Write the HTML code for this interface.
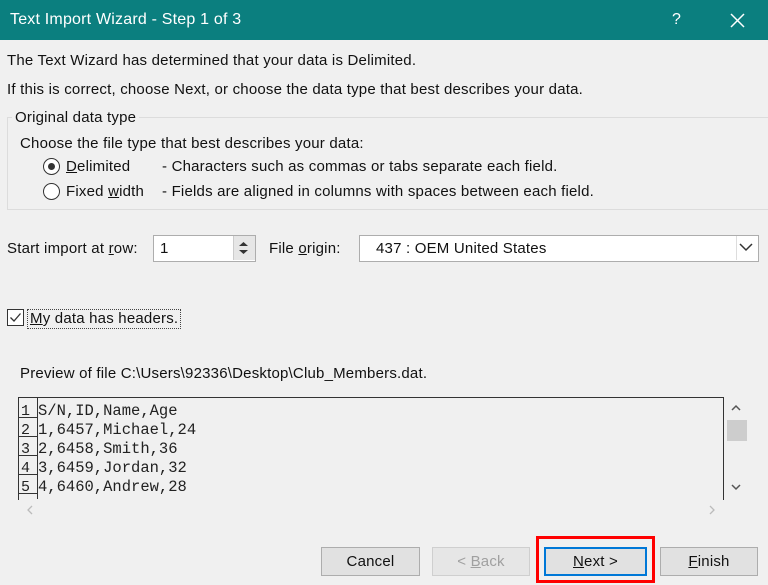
<!DOCTYPE html>
<html><head><meta charset="utf-8"><style>
body{margin:0;width:768px;height:585px;background:#f0f0f0;font-family:"Liberation Sans",sans-serif;font-size:15px;letter-spacing:0.2px;color:#111;position:relative;overflow:hidden}
.a{position:absolute;white-space:nowrap}
.t{line-height:18px;margin-top:1px}
.btn{position:absolute;top:547px;height:27px;border:1px solid #adadad;background:#e1e1e1;text-align:center;line-height:27px;font-size:15px}
.mono{font-family:"Liberation Mono",monospace;color:#222}
</style></head><body>
<div class="a" style="left:0;top:0;width:768px;height:40px;background:#0b7f7f"></div>
<div class="a t" style="left:10px;top:10px;color:#fff;font-size:16px">Text Import Wizard - Step 1 of 3</div>
<div class="a t" style="left:672px;top:10px;color:#fff;font-size:16px">?</div>
<svg class="a" style="left:730px;top:13px" width="15" height="15"><path d="M1 1L14 14M14 1L1 14" stroke="#fff" stroke-width="1.5"/></svg>

<div class="a t" style="left:7px;top:51px">The Text Wizard has determined that your data is Delimited.</div>
<div class="a t" style="left:7px;top:80px">If this is correct, choose Next, or choose the data type that best describes your data.</div>

<div class="a" style="left:7px;top:117px;width:770px;height:91px;border:1px solid #dcdcdc"></div>
<div class="a t" style="left:12px;top:108px;background:#f0f0f0;padding:0 3px">Original data type</div>
<div class="a t" style="left:20px;top:134px">Choose the file type that best describes your data:</div>
<div class="a" style="left:43px;top:158px;width:15px;height:15px;border:1px solid #333;border-radius:50%;background:#fff"></div>
<div class="a" style="left:48px;top:163px;width:7px;height:7px;border-radius:50%;background:#333"></div>
<div class="a t" style="left:66px;top:157px"><u>D</u>elimited</div>
<div class="a t" style="left:162px;top:157px">- Characters such as commas or tabs separate each field.</div>
<div class="a" style="left:43px;top:183px;width:15px;height:15px;border:1px solid #333;border-radius:50%;background:#fff"></div>
<div class="a t" style="left:66px;top:182px">Fixed <u>w</u>idth</div>
<div class="a t" style="left:162px;top:182px">- Fields are aligned in columns with spaces between each field.</div>

<div class="a t" style="left:7px;top:239px">Start import at <u>r</u>ow:</div>
<div class="a" style="left:153px;top:235px;width:101px;height:25px;border:1px solid #adadad;background:#fff"></div>
<div class="a t" style="left:160px;top:239px">1</div>
<div class="a" style="left:233px;top:236px;width:21px;height:24px;background:#e6e6e6;border-left:1px solid #ccc"></div>
<svg class="a" style="left:238px;top:240px" width="11" height="16"><path d="M1 6L5.5 2L10 6Z M1 10L5.5 14L10 10Z" fill="#333"/></svg>
<div class="a t" style="left:269px;top:239px">File <u>o</u>rigin:</div>
<div class="a" style="left:359px;top:235px;width:398px;height:25px;border:1px solid #adadad;background:#fff"></div>
<div class="a t" style="left:376px;top:239px">437 : OEM United States</div>
<div class="a" style="left:736px;top:236px;width:21px;height:24px;background:#fff;border-left:1px solid #ddd"></div>
<svg class="a" style="left:739px;top:242px" width="14" height="10"><path d="M1 2L7 8L13 2" stroke="#333" stroke-width="1.5" fill="none"/></svg>

<div class="a" style="left:7px;top:309px;width:15px;height:15px;border:1px solid #333;background:#fff"></div>
<svg class="a" style="left:9px;top:311px" width="13" height="13"><path d="M1.5 6.5L5 10L11.5 2.5" stroke="#333" stroke-width="1.3" fill="none"/></svg>
<div class="a t" style="left:27px;top:308px;border:1px dotted #444;padding:0 2px"><u>M</u>y data has headers.</div>

<div class="a t" style="left:20px;top:364px">Preview of file C:\Users\92336\Desktop\Club_Members.dat.</div>

<div class="a" style="left:18px;top:397px;width:704px;height:102px;border:1px solid #333;border-bottom:none;background:#f0f0f0"></div>
<div class="a" style="left:37px;top:398px;width:1px;height:101px;background:#333"></div>
<div class="a mono" style="left:21px;top:402px;line-height:19px;font-size:15px;letter-spacing:0">
<div>1</div><div>2</div><div>3</div><div>4</div><div>5</div></div>
<div class="a mono" style="left:38px;top:402px;line-height:19px;letter-spacing:0;font-size:15.5px">
<div>S/N,ID,Name,Age</div><div>1,6457,Michael,24</div><div>2,6458,Smith,36</div><div>3,6459,Jordan,32</div><div>4,6460,Andrew,28</div></div>
<div class="a" style="left:19px;top:417px;width:18px;height:1px;background:#333"></div>
<div class="a" style="left:19px;top:436px;width:18px;height:1px;background:#333"></div>
<div class="a" style="left:19px;top:455px;width:18px;height:1px;background:#333"></div>
<div class="a" style="left:19px;top:474px;width:18px;height:1px;background:#333"></div>
<div class="a" style="left:19px;top:493px;width:18px;height:1px;background:#333"></div>
<svg class="a" style="left:731px;top:404px" width="10" height="8"><path d="M1 6L5 2L9 6" stroke="#555" stroke-width="1.5" fill="none"/></svg>
<div class="a" style="left:727px;top:420px;width:20px;height:21px;background:#cdcdcd"></div>
<svg class="a" style="left:731px;top:483px" width="10" height="8"><path d="M1 2L5 6L9 2" stroke="#555" stroke-width="1.5" fill="none"/></svg>
<svg class="a" style="left:26px;top:505px" width="8" height="10"><path d="M6 1L2 5L6 9" stroke="#bbb" stroke-width="1.3" fill="none"/></svg>
<svg class="a" style="left:708px;top:505px" width="8" height="10"><path d="M2 1L6 5L2 9" stroke="#bbb" stroke-width="1.3" fill="none"/></svg>

<div class="btn" style="left:321px;width:97px">Cancel</div>
<div class="btn" style="left:432px;width:96px;color:#a0a0a0;border-color:#cfcfcf;background:#e6e6e6">&lt; <u>B</u>ack</div>
<div class="a" style="left:536px;top:536px;width:113px;height:41px;border:3px solid #f00"></div>
<div class="btn" style="left:544px;width:99px;border:2px solid #0078d7;height:25px;line-height:25px"><u>N</u>ext &gt;</div>
<div class="btn" style="left:660px;width:96px"><u>F</u>inish</div>
</body></html>
